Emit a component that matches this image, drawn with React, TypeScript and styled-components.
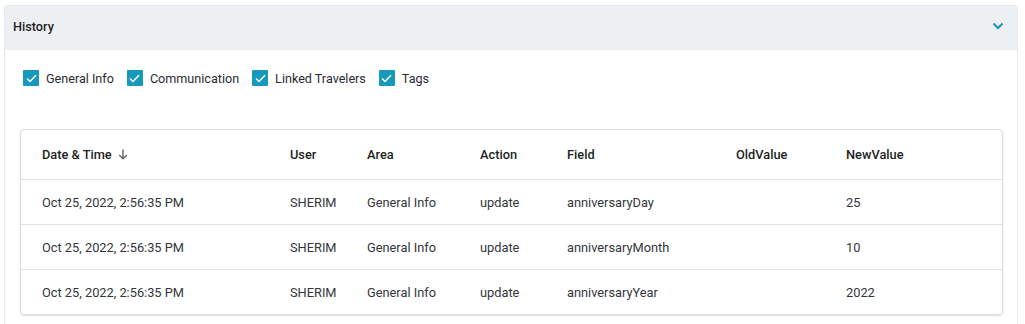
import React from 'react';
import styled, { createGlobalStyle } from 'styled-components';

const GlobalStyle = createGlobalStyle`
  body {
    margin: 0;
    background: #ffffff;
    font-family: Roboto, "Liberation Sans", Arial, sans-serif;
  }
`;

const accent = '#1798bd';

const Page = styled.div`
  padding: 5px 7px 0 4px;
`;

const Panel = styled.section`
  border: 1px solid #e6e8eb;
  border-bottom: none;
  border-radius: 4px 4px 0 0;
  height: 319px;
  box-sizing: border-box;
`;

const PanelHeader = styled.header`
  display: flex;
  align-items: center;
  justify-content: space-between;
  height: 44px;
  padding: 0 13px 4px 8px;
  box-sizing: border-box;
  background: #edf0f3;
  border-radius: 4px 4px 0 0;
`;

const PanelTitle = styled.h2`
  margin: 0;
  font-size: 12.7px;
  font-weight: 500;
  color: #1d1f24;
`;

const Chevron = styled.svg`
  width: 12px;
  height: 8px;
  display: block;
`;

const PanelBody = styled.div`
  padding: 20px 14px 0 15px;
`;

const Filters = styled.div`
  display: flex;
  gap: 13px;
  align-items: center;
  padding-left: 3px;
`;

const Filter = styled.label`
  display: flex;
  align-items: center;
  gap: 7px;
  font-size: 12.6px;
  color: #2a2c31;
`;

const Box = styled.span`
  width: 16px;
  height: 16px;
  background: ${accent};
  border-radius: 1px;
  display: flex;
  align-items: center;
  justify-content: center;
`;

const TableCard = styled.div`
  margin-top: 43px;
  border: 1px solid #dcdde1;
  border-radius: 4px;
  box-shadow: 0 1px 2px rgba(0, 0, 0, 0.12);
  overflow: hidden;
`;

const Row = styled.div<{ $head?: boolean }>`
  display: grid;
  grid-template-columns: 248px 77px 113px 87px 169px 110px 1fr;
  height: ${(p) => (p.$head ? 49 : 44)}px;
  align-items: center;
  & + & {
    border-top: 1px solid #e1e2e5;
  }
`;

const Cell = styled.div<{ $head?: boolean }>`
  padding-left: 21px;
  font-size: 12.8px;
  font-weight: ${(p) => (p.$head ? 500 : 400)};
  color: ${(p) => (p.$head ? '#1d1f24' : '#34363b')};
  display: flex;
  align-items: center;
  gap: 6px;
  white-space: nowrap;
`;

const columns = ['Date & Time', 'User', 'Area', 'Action', 'Field', 'OldValue', 'NewValue'];

const rows = [
  ['Oct 25, 2022, 2:56:35 PM', 'SHERIM', 'General Info', 'update', 'anniversaryDay', '', '25'],
  ['Oct 25, 2022, 2:56:35 PM', 'SHERIM', 'General Info', 'update', 'anniversaryMonth', '', '10'],
  ['Oct 25, 2022, 2:56:35 PM', 'SHERIM', 'General Info', 'update', 'anniversaryYear', '', '2022'],
];

const filters = ['General Info', 'Communication', 'Linked Travelers', 'Tags'];

function Check() {
  return (
    <svg width="11" height="9" viewBox="0 0 11 9">
      <path d="M1 4.5 L4 7.5 L10 1.2" fill="none" stroke="#fff" strokeWidth="1.5" />
    </svg>
  );
}

function SortDown() {
  return (
    <svg width="10" height="11" viewBox="0 0 10 11">
      <path d="M5 0.5 V9.5 M1.2 6 L5 9.8 L8.8 6" fill="none" stroke="#6b6d72" strokeWidth="1.5" />
    </svg>
  );
}

export default function App() {
  return (
    <Page>
      <GlobalStyle />
      <Panel>
        <PanelHeader>
          <PanelTitle>History</PanelTitle>
          <Chevron viewBox="0 0 12 8">
            <path d="M1.5 1.5 L6 6 L10.5 1.5" fill="none" stroke={accent} strokeWidth="2" />
          </Chevron>
        </PanelHeader>
        <PanelBody>
          <Filters>
            {filters.map((f) => (
              <Filter key={f}>
                <Box>
                  <Check />
                </Box>
                {f}
              </Filter>
            ))}
          </Filters>
          <TableCard>
            <Row $head>
              {columns.map((c, i) => (
                <Cell $head key={c}>
                  {c}
                  {i === 0 && <SortDown />}
                </Cell>
              ))}
            </Row>
            {rows.map((r, ri) => (
              <Row key={ri}>
                {r.map((v, ci) => (
                  <Cell key={ci}>{v}</Cell>
                ))}
              </Row>
            ))}
          </TableCard>
        </PanelBody>
      </Panel>
    </Page>
  );
}
